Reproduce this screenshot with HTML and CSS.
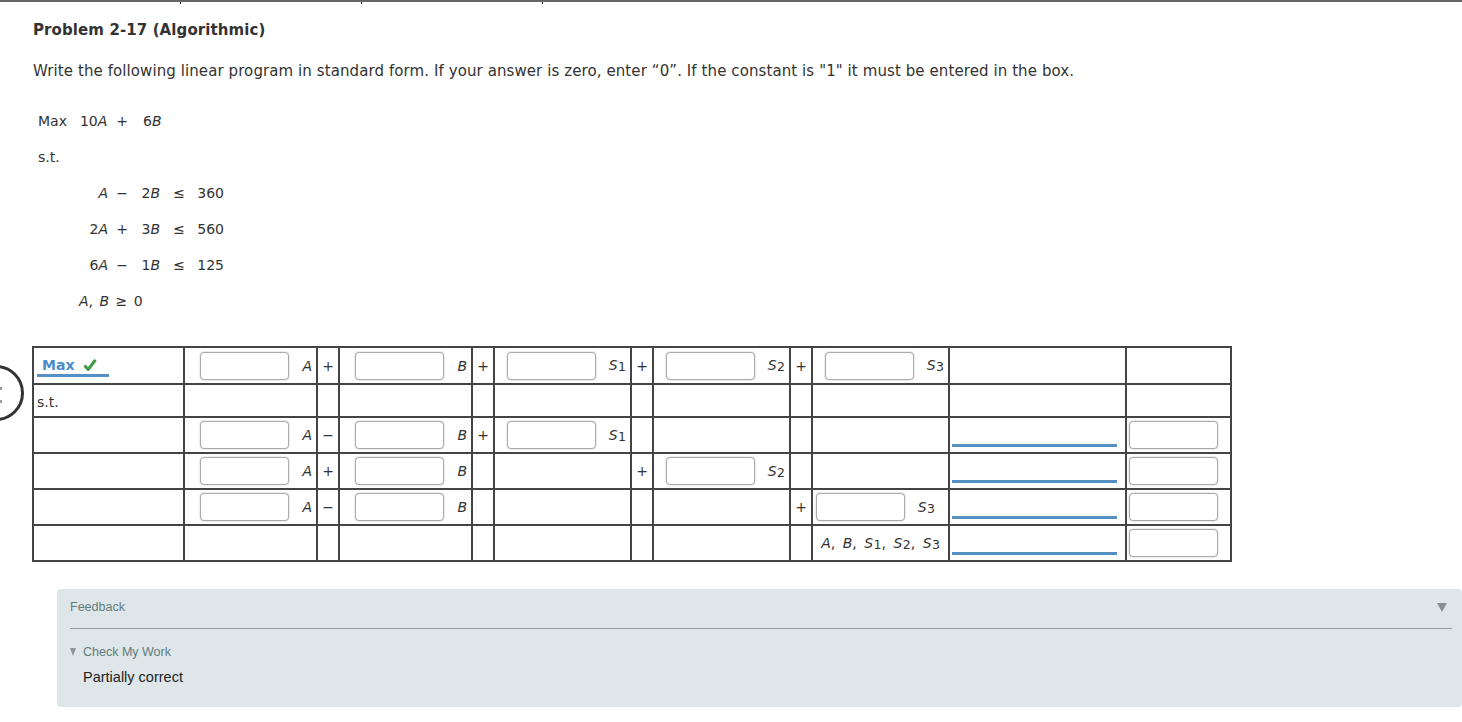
FILE: index.html
```html
<!DOCTYPE html>
<html lang="en">
<head>
<meta charset="utf-8">
<title>Problem 2-17 (Algorithmic)</title>
<link rel="stylesheet" href="styles.css">
</head>
<body>
<div class="topbar"><span class="seg"></span><span class="seg"></span><span class="seg"></span></div>
<svg class="ring" width="26" height="64" viewBox="0 0 26 64" aria-hidden="true">
  <circle cx="-4" cy="31" r="26.5" fill="none" stroke="#333" stroke-width="3"/>
  <rect x="0" y="25" width="2" height="3" fill="#999"/>
  <rect x="0" y="38" width="2" height="3" fill="#999"/>
</svg>
<main class="page">
  <h1 class="title">Problem 2-17 (Algorithmic)</h1>
  <p class="intro">Write the following linear program in standard form. If your answer is zero, enter “0”. If the constant is "1" it must be entered in the box.</p>

  <div class="lp">
    <div class="lp-obj"><span class="w-max">Max</span><span class="w-t1">10<i>A</i></span><span class="w-op">+</span><span>6<i>B</i></span></div>
    <div class="lp-st">s.t.</div>
    <div class="lp-row"><span class="c1"><i>A</i></span><span class="c2">−</span><span class="c3">2<i>B</i></span><span class="c4">≤</span><span class="c5">360</span></div>
    <div class="lp-row"><span class="c1">2<i>A</i></span><span class="c2">+</span><span class="c3">3<i>B</i></span><span class="c4">≤</span><span class="c5">560</span></div>
    <div class="lp-row"><span class="c1">6<i>A</i></span><span class="c2">−</span><span class="c3">1<i>B</i></span><span class="c4">≤</span><span class="c5">125</span></div>
    <div class="lp-nn"><i>A</i>, <i>B</i> ≥ 0</div>
  </div>

  <table class="sf">
    <colgroup>
      <col class="w151"><col class="w133"><col class="w22"><col class="w133"><col class="w22"><col class="w137"><col class="w22"><col class="w137"><col class="w22"><col class="w137"><col class="w177"><col class="w105">
    </colgroup>
    <tr class="r1">
      <td class="lbl"><div class="sel"><span class="sel-txt">Max</span><svg class="check" width="14" height="14" viewBox="0 0 14 14" aria-hidden="true"><path d="M1.5 7.5 L5.2 11.5 L12.5 1.8" fill="none" stroke="#3f9b3f" stroke-width="3" stroke-linejoin="round"/></svg></div></td>
      <td><div class="tv"><input class="box" type="text"><span class="v"><i>A</i></span></div></td>
      <td class="op">+</td>
      <td><div class="tv"><input class="box" type="text"><span class="v"><i>B</i></span></div></td>
      <td class="op">+</td>
      <td><div class="tv"><input class="box" type="text"><span class="v"><i>S</i><sub>1</sub></span></div></td>
      <td class="op">+</td>
      <td><div class="tv"><input class="box" type="text"><span class="v"><i>S</i><sub>2</sub></span></div></td>
      <td class="op">+</td>
      <td><div class="tv"><input class="box" type="text"><span class="v"><i>S</i><sub>3</sub></span></div></td>
      <td></td>
      <td></td>
    </tr>
    <tr class="r2">
      <td class="lbl st">s.t.</td>
      <td></td><td></td><td></td><td></td><td></td><td></td><td></td><td></td><td></td><td></td><td></td>
    </tr>
    <tr class="r3">
      <td></td>
      <td><div class="tv"><input class="box" type="text"><span class="v"><i>A</i></span></div></td>
      <td class="op">−</td>
      <td><div class="tv"><input class="box" type="text"><span class="v"><i>B</i></span></div></td>
      <td class="op">+</td>
      <td><div class="tv"><input class="box" type="text"><span class="v"><i>S</i><sub>1</sub></span></div></td>
      <td></td><td></td><td></td><td></td>
      <td class="rel"><div class="rel-line"></div></td>
      <td class="rhs"><input class="box" type="text"></td>
    </tr>
    <tr class="r4">
      <td></td>
      <td><div class="tv"><input class="box" type="text"><span class="v"><i>A</i></span></div></td>
      <td class="op">+</td>
      <td><div class="tv"><input class="box" type="text"><span class="v"><i>B</i></span></div></td>
      <td></td><td></td>
      <td class="op">+</td>
      <td><div class="tv"><input class="box" type="text"><span class="v"><i>S</i><sub>2</sub></span></div></td>
      <td></td><td></td>
      <td class="rel"><div class="rel-line"></div></td>
      <td class="rhs"><input class="box" type="text"></td>
    </tr>
    <tr class="r5">
      <td></td>
      <td><div class="tv"><input class="box" type="text"><span class="v"><i>A</i></span></div></td>
      <td class="op">−</td>
      <td><div class="tv"><input class="box" type="text"><span class="v"><i>B</i></span></div></td>
      <td></td><td></td><td></td><td></td>
      <td class="op">+</td>
      <td><div class="tv tv-s3"><input class="box" type="text"><span class="v"><i>S</i><sub>3</sub></span></div></td>
      <td class="rel"><div class="rel-line"></div></td>
      <td class="rhs"><input class="box" type="text"></td>
    </tr>
    <tr class="r6">
      <td></td><td></td><td></td><td></td><td></td><td></td><td></td><td></td><td></td>
      <td class="vars"><i>A</i>, <i>B</i>, <i>S</i><sub>1</sub>, <i>S</i><sub>2</sub>, <i>S</i><sub>3</sub></td>
      <td class="rel"><div class="rel-line"></div></td>
      <td class="rhs"><input class="box" type="text"></td>
    </tr>
  </table>
</main>

<section class="feedback">
  <div class="fb-head"><span class="fb-title">Feedback</span><span class="fb-toggle"></span></div>
  <div class="fb-rule"></div>
  <div class="fb-check"><span class="fb-tri"></span>Check My Work</div>
  <div class="fb-result">Partially correct</div>
</section>
</body>
</html>
```

FILE: styles.css
```css
html, body {
  margin: 0;
  padding: 0;
  background: #fff;
}

body {
  font-family: "DejaVu Sans", Verdana, sans-serif;
  font-size: 14px;
  color: #333;
  position: relative;
  width: 1462px;
  height: 722px;
  overflow: hidden;
}

.topbar {
  display: flex;
  border-top: 2px solid #666;
  height: 2px;
}

.seg {
  width: 181px;
  box-sizing: border-box;
  border-right: 1px solid #222;
}

.ring {
  position: absolute;
  left: 0;
  top: 362px;
}

.page {
  padding-left: 33px;
}

.title {
  margin: 17px 0 0;
  font-size: 15px;
  line-height: 18px;
  font-weight: bold;
  color: #333;
  letter-spacing: 0.1px;
}

.intro {
  margin: 23px 0 0;
  font-size: 15px;
  line-height: 18px;
  letter-spacing: 0.09px;
}

.lp {
  margin-top: 24px;
  padding-left: 5px;
}

.lp i, .sf i {
  font-style: italic;
}

.lp-obj, .lp-st, .lp-row, .lp-nn {
  height: 36px;
  line-height: 36px;
}

.lp-obj {
  display: flex;
  height: 35px;
  line-height: 35px;
}

.w-max { margin-right: 13px; }
.w-t1 { margin-right: 9px; }
.w-op { margin-right: 15px; }

.lp-row {
  display: grid;
  grid-template-columns: 72px 24px 28px 34px 28px;
}

.lp-row .c1, .lp-row .c3, .lp-row .c5 { text-align: right; }
.lp-row .c2, .lp-row .c4 { text-align: center; }
.lp-row .c1 { padding-right: 2px; }
.lp-row .c3 { padding-right: 2px; }

.lp-nn {
  padding-left: 41px;
  word-spacing: 2px;
}

/* standard form table */
.sf {
  margin-top: 27px;
  margin-left: -1px;
  border-collapse: collapse;
  table-layout: fixed;
  width: 1200px;
}

.w151 { width: 151px; }
.w133 { width: 133px; }
.w22 { width: 22px; }
.w137 { width: 137px; }
.w177 { width: 177px; }
.w105 { width: 105px; }

.sf td {
  border: 2px solid #444;
  padding: 0 3px;
  font-size: 14px;
  color: #333;
}

.r1 { height: 37px; }
.r2 { height: 33px; }
.r3, .r4, .r5, .r6 { height: 36px; }

.sf td.op {
  padding: 0;
  text-align: center;
}

.tv {
  display: flex;
  justify-content: flex-end;
  align-items: center;
  gap: 13px;
  padding-right: 1px;
}

.v {
  white-space: nowrap;
}

.tv-s3 {
  padding-right: 10px;
}

.sf sub {
  font-size: 12.5px;
  vertical-align: -1px;
  line-height: 1;
  margin-left: 0.5px;
}

.box {
  display: block;
  flex: none;
  box-sizing: border-box;
  width: 89px;
  height: 28px;
  margin: 0;
  padding: 0 4px;
  border: 1px solid #aaa;
  border-radius: 4px;
  background: #fff;
  box-shadow: 0 0 2px rgba(0, 0, 0, 0.25);
  font: inherit;
}

.sel {
  display: flex;
  align-items: center;
  width: 72px;
  box-sizing: border-box;
  padding: 1px 0 1px 5px;
  border-bottom: 3px solid #5590c5;
  margin-top: 1px;
}

.sel-txt {
  color: #4b8cc8;
  font-weight: bold;
  margin-right: 9px;
}

.check {
  display: block;
}

.sf td.st {
  padding-top: 2px;
}

.sf td.rel {
  vertical-align: bottom;
  padding: 0 8px 5px 2px;
}

.rel-line {
  height: 0;
  border-bottom: 3px solid #5590c5;
}

.sf td.rhs {
  padding: 0 2px;
}

.sf td.vars {
  text-align: right;
  padding-right: 8px;
  white-space: nowrap;
  word-spacing: 3px;
}

/* feedback */
.feedback {
  margin: 27px 0 0 57px;
  width: 1405px;
  height: 118px;
  box-sizing: border-box;
  background: #dfe6e9;
  border-radius: 4px;
  padding: 10px 10px 0 13px;
  font-family: "Liberation Sans", Arial, sans-serif;
}

.fb-head {
  display: flex;
  justify-content: space-between;
  align-items: center;
  height: 16px;
}

.fb-title {
  font-size: 12.5px;
  color: #5f7c7c;
}

.fb-toggle {
  width: 0;
  height: 0;
  border-left: 5px solid transparent;
  border-right: 5px solid transparent;
  border-top: 9px solid #848f95;
  margin-right: 5px;
}

.fb-rule {
  margin-top: 13px;
  border-top: 1px solid #919b9b;
}

.fb-check {
  margin-top: 15px;
  display: flex;
  align-items: center;
  height: 16px;
  font-size: 12.5px;
  color: #5f7c7c;
}

.fb-tri {
  width: 0;
  height: 0;
  border-left: 3.5px solid transparent;
  border-right: 3.5px solid transparent;
  border-top: 8px solid #8a969c;
  margin-right: 7px;
}

.fb-result {
  margin-top: 9px;
  padding-left: 13px;
  font-size: 14.5px;
  line-height: 16px;
  color: #222;
}
```
